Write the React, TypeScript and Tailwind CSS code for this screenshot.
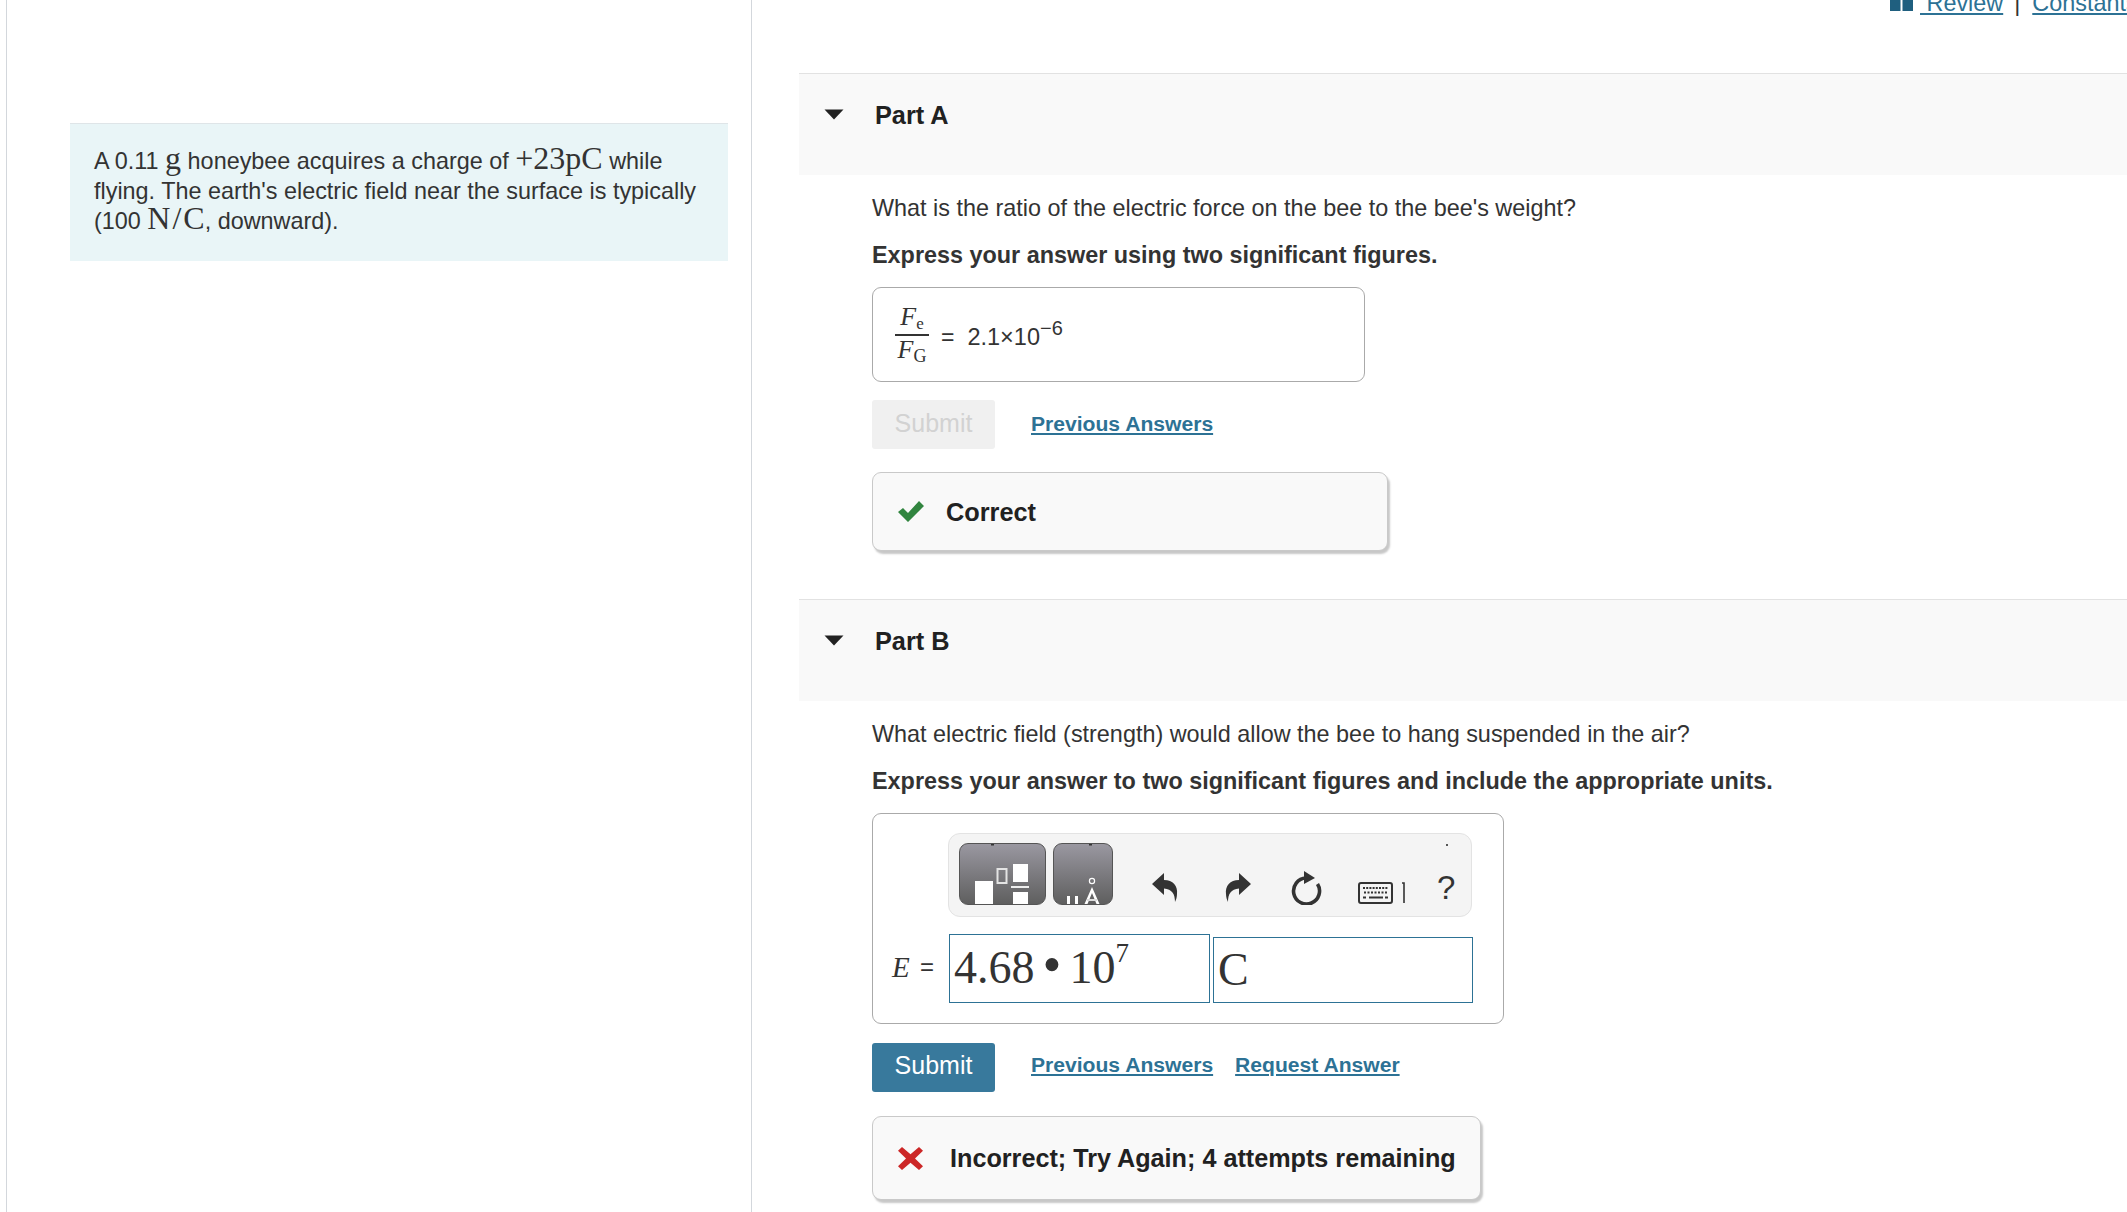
import React from "react";

const M = ({ children }: { children: React.ReactNode }) => (
  <span className="font-['Liberation_Serif',serif] text-[32px] leading-[20px]">{children}</span>
);

const linkCls = "font-bold text-[21.1px] text-[#2d7295] underline underline-offset-2";

function Header({ label }: { label: string }) {
  return (
    <div className="flex h-[102px] items-start border-t border-[#e2e2e2] bg-[#f9f9f9] pl-[25px] pt-[27px]">
      <svg width="20" height="11" viewBox="0 0 20 11" className="mt-[8px]">
        <path d="M0.5 0.5H19.5L10 10.5Z" fill="#222" />
      </svg>
      <span className="ml-[31px] text-[25.3px] font-bold leading-[28px] text-[#212121]">{label}</span>
    </div>
  );
}

function Undo({ flip }: { flip?: boolean }) {
  return (
    <svg width="26" height="29" viewBox="0 0 26 29" className={flip ? "-scale-x-100" : ""}>
      <path d="M0 11 L12 0 V7 C21 7 26 13 25 21 C25 24 24 27 23 29 C23 21 20 16 12 15.5 V22 Z" fill="#333" />
    </svg>
  );
}

function Refresh() {
  return (
    <svg width="31" height="34" viewBox="0 0 31 34">
      <path d="M15 7 A13 13 0 1 0 26.5 13" fill="none" stroke="#333" strokeWidth="3.6" />
      <path d="M13 0 L24 7 L13 13 Z" fill="#333" />
    </svg>
  );
}

function Keyboard() {
  return (
    <svg width="48" height="22" viewBox="0 0 48 22">
      <rect x="1" y="1" width="33" height="20" rx="2" fill="#f4f4f4" stroke="#333" strokeWidth="2" />
      <path d="M5 6H30" stroke="#333" strokeWidth="2" strokeDasharray="2 1.2" />
      <path d="M6 10.5H29" stroke="#333" strokeWidth="2" strokeDasharray="2 1.5" />
      <path d="M5 15.5H8M11 15.5H25M27 15.5H30" stroke="#333" strokeWidth="2" />
      <path d="M44 1 H46 V21" fill="none" stroke="#333" strokeWidth="1.6" />
    </svg>
  );
}

function TemplateBtn() {
  return (
    <div className="h-[62px] w-[87px] overflow-hidden rounded-[9px] border border-[#555] bg-gradient-to-b from-[#9a98a1] to-[#5f5f5f]">
      <svg width="85" height="60" viewBox="0 0 85 60">
        <rect x="31" y="0" width="3" height="1.5" fill="#333" />
        <rect x="15" y="37" width="18" height="23" fill="#fff" />
        <rect x="37.5" y="25" width="9" height="14" fill="none" stroke="#e4e4e4" strokeWidth="2" />
        <rect x="53" y="20" width="15" height="18" fill="#fff" />
        <rect x="51" y="42" width="18" height="2" fill="#eee" />
        <rect x="53" y="48" width="15" height="12" fill="#fff" />
      </svg>
    </div>
  );
}

function UnitBtn() {
  return (
    <div className="ml-[7px] h-[62px] w-[60px] overflow-hidden rounded-[9px] border border-[#555] bg-gradient-to-b from-[#9a98a1] to-[#5f5f5f]">
      <svg width="58" height="60" viewBox="0 0 58 60">
        <rect x="35" y="0" width="3" height="1.5" fill="#333" />
        <rect x="13" y="52" width="3" height="8" fill="#fff" />
        <rect x="21" y="52" width="3" height="8" fill="#fff" />
        <circle cx="38" cy="37" r="2.6" fill="none" stroke="#fff" strokeWidth="1.2" />
        <path d="M38 43 L45.5 60 H42.5 L38 49 L33.5 60 H30.5 Z" fill="#fff" />
        <rect x="33" y="55" width="10" height="2" fill="#ddd" />
      </svg>
    </div>
  );
}

export default function App() {
  return (
    <div className="flex h-[1212px] w-[2127px] overflow-hidden bg-white font-['Liberation_Sans',Arial,sans-serif] text-[23.4px] leading-[30px] text-[#333]">
      <aside className="ml-[6px] w-[746px] shrink-0 border-x border-[#d3d7dc] pl-[63px] pr-[23px] pt-[123px]">
        <div className="h-[138px] border-t border-[#dfe5e8] bg-[#e9f5f7] pl-[24px] pr-[22px] pt-[22px] text-[23.4px] leading-[30px]">
          A 0.11 <M>g</M> honeybee acquires a charge of <M>+23pC</M> while flying. The earth's electric field near the surface is typically (100 <M>N<span className="mx-[2px]">/</span>C</M>, downward).
        </div>
      </aside>

      <main className="min-w-0 flex-1 pl-[47px]">
        <div className="h-[73px] overflow-hidden">
          <div className="-mt-[12px] flex items-start whitespace-nowrap pl-[1091px] leading-[30px]">
            <svg width="23" height="23" viewBox="0 0 23 23" className="shrink-0">
              <path d="M0 0H10.5V23H0ZM12.5 0H23V23H12.5Z" fill="#1f5f7f" />
            </svg>
            <a className="ml-[7px] text-[#2d7295] underline underline-offset-2">&nbsp;Review</a>
            <span className="ml-[11px] mr-[12px] text-[#333]">|</span>
            <a className="text-[#2d7295] underline underline-offset-2">Constants</a>
          </div>
        </div>

        <Header label="Part A" />
        <section className="pl-[73px]">
          <p className="mt-[18px]">What is the ratio of the electric force on the bee to the bee's weight?</p>
          <p className="mt-[17px] font-bold">Express your answer using two significant figures.</p>
          <div className="mt-[17px] flex h-[95px] w-[493px] items-center rounded-[9px] border border-[#aaa] pl-[22px]">
            <div className="flex w-[34px] flex-col items-center font-['Liberation_Serif',serif] text-[26px] italic leading-[28px]">
              <span className="w-full whitespace-nowrap border-b-2 border-[#333] pb-[3px] text-center">
                F<sub className="-bottom-[4px] text-[17px] not-italic leading-none">e</sub>
              </span>
              <span className="whitespace-nowrap pb-[3px]">
                F<sub className="-bottom-[4px] text-[18px] not-italic leading-none">G</sub>
              </span>
            </div>
            <span className="ml-[12px] mt-[5px] text-[23px]">=</span>
            <span className="ml-[13px] mt-[5px] whitespace-nowrap text-[23.5px]">
              2.1×10<sup className="-top-[10px] text-[20px] leading-none">−6</sup>
            </span>
          </div>
          <div className="mt-[18px] flex items-center">
            <button className="h-[49px] w-[123px] rounded-[3px] bg-[#f0f0f0] pb-[3px] text-[25px] text-[#d2d2d2]">Submit</button>
            <a className={`-mt-[1px] ml-[36px] ${linkCls}`}>Previous Answers</a>
          </div>
          <div className="mt-[23px] flex h-[79px] w-[516px] items-center rounded-[9px] border border-[#c9c9c9] bg-[#f9f9f9] pl-[25px] shadow-[2px_3px_2px_rgba(0,0,0,0.22)]">
            <svg width="26" height="21" viewBox="0 0 26 21">
              <path d="M0 11 L5 7 L10 12 L21 0 L26 5 L10 21 Z" fill="#31853f" />
            </svg>
            <span className="ml-[22px] text-[25.3px] font-bold text-[#212121]">Correct</span>
          </div>
        </section>

        <div className="mt-[48px]">
          <Header label="Part B" />
        </div>
        <section className="pl-[73px]">
          <p className="mt-[18px]">What electric field (strength) would allow the bee to hang suspended in the air?</p>
          <p className="mt-[17px] font-bold">Express your answer to two significant figures and include the appropriate units.</p>
          <div className="mt-[17px] h-[211px] w-[632px] rounded-[9px] border border-[#aaa] pl-[75px] pt-[19px]">
            <div className="relative flex h-[84px] w-[524px] items-start rounded-[12px] border border-[#e3e3e3] bg-[#f4f4f4] pl-[10px] pt-[9px]">
              <TemplateBtn />
              <UnitBtn />
              <div className="ml-[39px] mt-[30px]"><Undo /></div>
              <div className="ml-[47px] mt-[30px]"><Undo flip /></div>
              <div className="ml-[40px] mt-[28px]"><Refresh /></div>
              <div className="ml-[36px] mt-[39px]"><Keyboard /></div>
              <span className="ml-[31px] mt-[27px] text-[33px] leading-[36px]">?</span>
              <span className="absolute left-[497px] top-[10px] h-[2px] w-[2px] bg-[#555]" />
            </div>
            <div className="-ml-[57px] mt-[17px] flex items-end">
              <span className="mb-[24px] flex w-[58px] whitespace-nowrap pl-[1px] text-[24px] leading-[24px]">
                <span className="w-[28px] font-['Liberation_Serif',serif] text-[29px] italic">E</span>=
              </span>
              <div className="flex h-[69px] w-[261px] items-center border border-[#2d7295] pl-[4px] font-['Liberation_Serif',serif] text-[46px] leading-[60px] text-[#333]">
                <span className="-mt-[1px] whitespace-nowrap">
                  4.68<span className="inline-block w-[35px] text-center text-[54px] leading-none">•</span>10<sup className="-top-[21px] text-[27px] leading-none">7</sup>
                </span>
              </div>
              <div className="ml-[3px] flex h-[66px] w-[260px] items-center border border-[#2d7295] pl-[4px] font-['Liberation_Serif',serif] text-[46px] text-[#333]">C</div>
            </div>
          </div>
          <div className="mt-[19px] flex items-center">
            <button className="h-[49px] w-[123px] rounded-[3px] bg-[#38799c] pb-[5px] text-[25px] text-white">Submit</button>
            <a className={`-mt-[5px] ml-[36px] ${linkCls}`}>Previous Answers</a>
            <a className={`-mt-[5px] ml-[22px] ${linkCls}`}>Request Answer</a>
          </div>
          <div className="mt-[24px] flex h-[84px] w-[609px] items-center rounded-[9px] border border-[#c9c9c9] bg-[#f9f9f9] pl-[25px] shadow-[2px_3px_2px_rgba(0,0,0,0.22)]">
            <svg width="25" height="23" viewBox="0 0 25 25" preserveAspectRatio="none">
              <path d="M0 4 L4 0 L12.5 8 L21 0 L25 4 L17 12.5 L25 21 L21 25 L12.5 17 L4 25 L0 21 L8 12.5 Z" fill="#cc2727" />
            </svg>
            <span className="ml-[27px] text-[25.2px] font-bold text-[#212121]">Incorrect; Try Again; 4 attempts remaining</span>
          </div>
        </section>
      </main>
    </div>
  );
}
